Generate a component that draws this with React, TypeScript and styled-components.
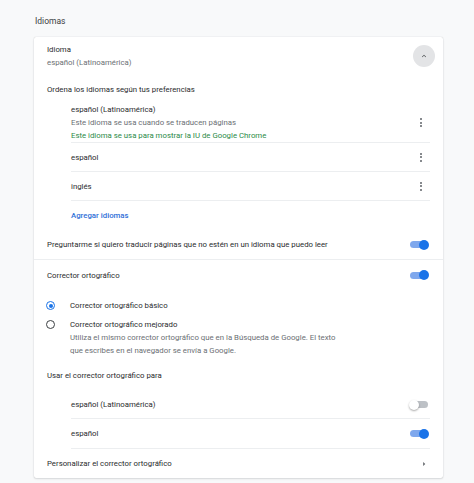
import React from "react"
import styled, { createGlobalStyle } from "styled-components"

const GlobalStyle = createGlobalStyle`
  html, body {
    margin: 0;
    padding: 0;
    background: #f8f9fa;
  }
  body {
    font-family: Roboto, "Liberation Sans", Arial, sans-serif;
    font-size: 7.8px;
    color: #202124;
  }
`

const Page = styled.div`
  width: 474px;
  height: 483px;
  box-sizing: border-box;
  padding: 14px 0 0 34px;
  overflow: hidden;
`

const Heading = styled.h2`
  margin: 0 0 9px 1px;
  font-size: 8.5px;
  line-height: 14px;
  font-weight: 400;
  color: #3c4043;
`

const Card = styled.div`
  width: 409px;
  background: #fff;
  border-radius: 2px;
  box-shadow: 0 0 1px rgba(60, 64, 67, 0.3), 0 1px 2px rgba(60, 64, 67, 0.15);
  padding: 0 13px;
  box-sizing: border-box;
`

const Row = styled.div<{ $h: number; $indent?: boolean; $border?: boolean }>`
  display: flex;
  align-items: center;
  justify-content: space-between;
  min-height: ${(p) => p.$h}px;
  box-sizing: border-box;
  margin-left: ${(p) => (p.$indent ? "24px" : "0")};
  border-bottom: ${(p) => (p.$border ? "1px solid #eceef0" : "none")};
`

const FullDivider = styled.div`
  height: 1px;
  background: #eceef0;
  margin: 0 -13px;
`

const Texts = styled.div`
  display: flex;
  flex-direction: column;
  line-height: 13px;
`

const Primary = styled.span`
  color: #2a2b2e;
`

const Secondary = styled.span<{ $green?: boolean }>`
  color: ${(p) => (p.$green ? "#2b8a48" : "#6b6f74")};
`

const Link = styled.span`
  color: #2f6fd8;
  font-weight: 500;
`

const ExpandButton = styled.div`
  width: 22px;
  height: 22px;
  border-radius: 50%;
  background: #e3e4e6;
  display: flex;
  align-items: center;
  justify-content: center;
  margin-right: -5px;
`

const Kebab = styled.div`
  width: 24px;
  height: 16px;
  margin-right: -3px;
  display: flex;
  flex-direction: column;
  align-items: center;
  justify-content: center;
  gap: 1.5px;
  span {
    width: 2px;
    height: 2px;
    border-radius: 50%;
    background: #5f6368;
  }
`

const ToggleTrack = styled.div<{ $on: boolean }>`
  position: relative;
  width: 18px;
  height: 7px;
  border-radius: 4px;
  margin-right: 2px;
  background: ${(p) => (p.$on ? "#7fa8ed" : "#bdc1c6")};
`

const ToggleKnob = styled.div<{ $on: boolean }>`
  position: absolute;
  top: -1.5px;
  left: ${(p) => (p.$on ? "9px" : "-1px")};
  width: 10px;
  height: 10px;
  border-radius: 50%;
  background: ${(p) => (p.$on ? "#1a73e8" : "#fff")};
  box-shadow: ${(p) => (p.$on ? "none" : "0 1px 2px rgba(0,0,0,0.35)")};
`

const RadioRow = styled.div<{ $h: number; $top?: number }>`
  display: flex;
  align-items: flex-start;
  min-height: ${(p) => p.$h}px;
  padding-top: ${(p) => p.$top || 0}px;
  box-sizing: border-box;
`

const Radio = styled.div<{ $checked: boolean }>`
  width: 9px;
  height: 9px;
  box-sizing: border-box;
  border-radius: 50%;
  margin: 2px 15px 0 -1px;
  border: 1.5px solid ${(p) => (p.$checked ? "#1a73e8" : "#3c4043")};
  display: flex;
  align-items: center;
  justify-content: center;
  flex-shrink: 0;
  &::after {
    content: "";
    display: ${(p) => (p.$checked ? "block" : "none")};
    width: 4px;
    height: 4px;
    border-radius: 50%;
    background: #1a73e8;
  }
`

function Toggle({ on }: { on: boolean }) {
  return (
    <ToggleTrack $on={on}>
      <ToggleKnob $on={on} />
    </ToggleTrack>
  )
}

function MoreIcon() {
  return (
    <Kebab>
      <span />
      <span />
      <span />
    </Kebab>
  )
}

export default function App() {
  return (
    <Page>
      <GlobalStyle />
      <Heading>Idiomas</Heading>
      <Card>
        <Row $h={38}>
          <Texts>
            <Primary>Idioma</Primary>
            <Secondary>español (Latinoamérica)</Secondary>
          </Texts>
          <ExpandButton>
            <svg width="8" height="8" viewBox="0 0 24 24">
              <path d="M7.4 15.4 12 10.8l4.6 4.6L18 14l-6-6-6 6z" fill="#3c4043" />
            </svg>
          </ExpandButton>
        </Row>
        <Row $h={28}>
          <Primary>Ordena los idiomas según tus preferencias</Primary>
        </Row>
        <Row $h={40} $indent $border>
          <Texts>
            <Primary>español (Latinoamérica)</Primary>
            <Secondary>Este idioma se usa cuando se traducen páginas</Secondary>
            <Secondary $green>Este idioma se usa para mostrar la IU de Google Chrome</Secondary>
          </Texts>
          <MoreIcon />
        </Row>
        <Row $h={29} $indent $border>
          <Primary>español</Primary>
          <MoreIcon />
        </Row>
        <Row $h={29} $indent $border>
          <Primary>inglés</Primary>
          <MoreIcon />
        </Row>
        <Row $h={29} $indent>
          <Link>Agregar idiomas</Link>
        </Row>
        <Row $h={29}>
          <Primary>Preguntarme si quiero traducir páginas que no estén en un idioma que puedo leer</Primary>
          <Toggle on />
        </Row>
        <FullDivider />
        <Row $h={30}>
          <Primary>Corrector ortográfico</Primary>
          <Toggle on />
        </Row>
        <RadioRow $h={28} $top={9}>
          <Radio $checked />
          <Texts>
            <Primary>Corrector ortográfico básico</Primary>
          </Texts>
        </RadioRow>
        <RadioRow $h={41}>
          <Radio $checked={false} />
          <Texts>
            <Primary>Corrector ortográfico mejorado</Primary>
            <Secondary>
              Utiliza el mismo corrector ortográfico que en la Búsqueda de Google. El texto
              <br />
              que escribes en el navegador se envía a Google.
            </Secondary>
          </Texts>
        </RadioRow>
        <Row $h={32}>
          <Primary>Usar el corrector ortográfico para</Primary>
        </Row>
        <Row $h={28} $indent $border>
          <Primary>español (Latinoamérica)</Primary>
          <Toggle on={false} />
        </Row>
        <Row $h={30} $indent $border>
          <Primary>español</Primary>
          <Toggle on />
        </Row>
        <Row $h={29}>
          <Primary>Personalizar el corrector ortográfico</Primary>
          <svg width="10" height="10" viewBox="0 0 24 24" style={{ marginRight: 1 }}>
            <path d="M10 17l5-5-5-5z" fill="#5f6368" />
          </svg>
        </Row>
      </Card>
    </Page>
  )
}
